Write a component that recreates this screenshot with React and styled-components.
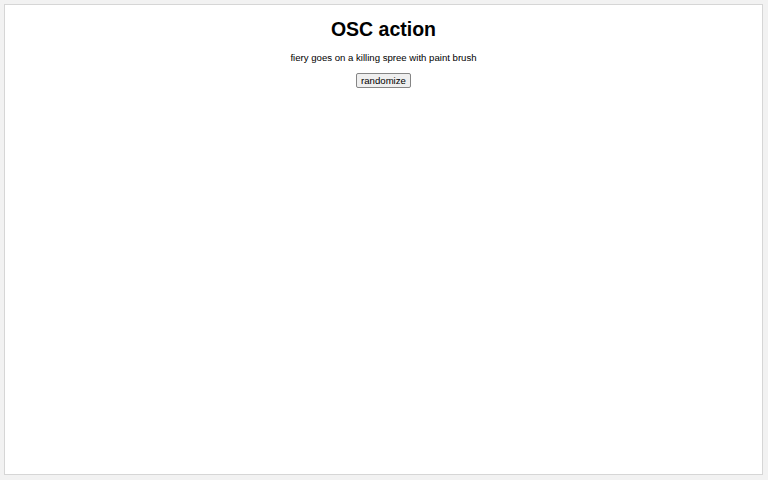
import React, { useState } from 'react';
import styled, { createGlobalStyle } from 'styled-components';

const GlobalStyle = createGlobalStyle`
  html, body {
    margin: 0;
    padding: 0;
    background: #f2f2f2;
    font-family: "Liberation Sans", Arial, sans-serif;
  }
`;

const Page = styled.div`
  padding: 4px 5px 5px 4px;
  box-sizing: border-box;
  height: 480px;
`;

const Card = styled.main`
  box-sizing: border-box;
  height: 100%;
  background: #fff;
  border: 1px solid #d6d6d6;
  display: flex;
  flex-direction: column;
  align-items: center;
  padding-top: 13px;
`;

const Title = styled.h1`
  margin: 0;
  font-size: 19.5px;
  font-weight: bold;
  color: #000;
  line-height: 23px;
`;

const Action = styled.p`
  margin: 11px 0 0;
  font-size: 9.6px;
  color: #000;
  line-height: 12px;
`;

const Button = styled.button`
  margin-top: 9px;
  font-family: "Liberation Sans", Arial, sans-serif;
  font-size: 9.6px;
  line-height: 11px;
  padding: 1px 4px;
  background: #efefef;
  border: 1px solid #858585;
  border-radius: 2px;
  color: #000;
`;

const actions = [
  'fiery goes on a killing spree with paint brush',
];

export default function App() {
  const [text, setText] = useState(actions[0]);
  return (
    <>
      <GlobalStyle />
      <Page>
        <Card>
          <Title>OSC action</Title>
          <Action>{text}</Action>
          <Button onClick={() => setText(actions[Math.floor(Math.random() * actions.length)])}>
            randomize
          </Button>
        </Card>
      </Page>
    </>
  );
}
